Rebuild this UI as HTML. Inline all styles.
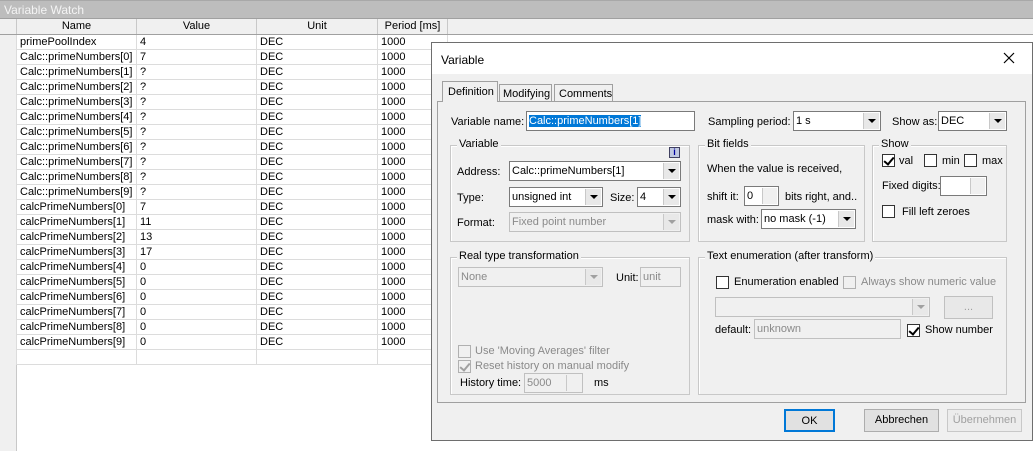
<!DOCTYPE html>
<html><head><meta charset="utf-8"><style>
*{box-sizing:border-box;margin:0;padding:0}
body{width:1033px;height:451px;overflow:hidden;background:#fff;font-family:"Liberation Sans",sans-serif;font-size:11px;color:#000;position:relative}
.a{position:absolute;white-space:nowrap}
.title{left:0;top:0;width:1033px;height:19px;background:#bdbdbd;border-bottom:1px solid #a0a0a0;border-top:1px solid #a8a8a8;color:#f4f4f4;font-size:12px;padding:2px 4px}
.hdr{left:0;top:19px;width:1033px;height:16px;background:#f0f0f0;border-bottom:1px solid #a0a0a0}
.rh{left:0;top:35px;width:17px;height:416px;background:#f0f0f0;border-right:1px solid #c8c8c8}
.row{left:0;width:1033px;height:15px;border-bottom:1px solid #dcdcdc}
.c{position:absolute;top:0;height:15px;border-right:1px solid #dcdcdc;padding-left:3px;line-height:14px}
.h{position:absolute;top:0;height:15px;border-right:1px solid #c8c8c8;text-align:center;line-height:15px}
.dlg{left:431px;top:42px;width:602px;height:399px;background:#f0f0f0;border:1px solid #6e6e6e}
.dt{left:0;top:0;width:600px;height:31px;background:#fff}
.grp{position:absolute;border:1px solid #c8c8c8;box-shadow:inset 1px 1px 0 #fff}
.gl{position:absolute;top:-8px;left:6px;background:#f0f0f0;padding:0 2px}
.in{position:absolute;background:#fff;border:1px solid #7a7a7a;height:20px;line-height:18px;padding-left:2px}
.dis{background:#f0f0f0;color:#8a8a8a;border-color:#c0c0c0}
.dd{position:absolute;right:1px;top:1px;width:16px;height:16px;background:#e8e8e8;border-left:1px solid #c8c8c8}
.dd:after{content:"";position:absolute;left:4px;top:6px;border-left:4px solid transparent;border-right:4px solid transparent;border-top:4px solid #000}
.dis .dd:after{border-top-color:#a0a0a0}
.cb{position:absolute;width:13px;height:13px;border:1px solid #333;background:#fff}
.cb.d{border-color:#b0b0b0;background:#f0f0f0}
.chk:after{content:"";position:absolute;left:3px;top:0px;width:4px;height:8px;border:solid #000;border-width:0 2px 2px 0;transform:rotate(40deg)}
.cb.d.chk:after{border-color:#a0a0a0}
.btn{position:absolute;height:23px;border:1px solid #adadad;background:#e1e1e1;text-align:center;line-height:21px}
.gr{color:#8a8a8a}
.spin{position:absolute;right:1px;top:1px;width:15px;height:16px;border-left:1px solid #c8c8c8;background:#f0f0f0}
</style></head><body>
<div class="a title">Variable Watch</div>
<div class="a hdr">
<div class="h" style="left:0;width:17px"></div>
<div class="h" style="left:17px;width:120px">Name</div>
<div class="h" style="left:137px;width:120px">Value</div>
<div class="h" style="left:257px;width:121px">Unit</div>
<div class="h" style="left:378px;width:70px">Period [ms]</div>
</div>
<div class="a rh"></div>
<div id="rows"></div>
<script>
var d=[["primePoolIndex","4"],["Calc::primeNumbers[0]","7"]];
for(var i=1;i<10;i++)d.push(["Calc::primeNumbers["+i+"]","?"]);
var v=["7","11","13","17","0","0","0","0","0","0"];
for(var i=0;i<10;i++)d.push(["calcPrimeNumbers["+i+"]",v[i]]);
d.push(["",""]);
var h="";
for(var i=0;i<d.length;i++){var e=d[i][0]!="";
h+='<div class="a row" style="top:'+(35+i*15)+'px"><div class="c" style="left:0;width:17px;background:#f0f0f0"></div><div class="c" style="left:17px;width:120px">'+d[i][0]+'</div><div class="c" style="left:137px;width:120px">'+d[i][1]+'</div><div class="c" style="left:257px;width:121px">'+(e?"DEC":"")+'</div><div class="c" style="left:378px;width:70px">'+(e?"1000":"")+'</div></div>';}
document.getElementById("rows").innerHTML=h;
</script>
<div class="a dlg">
<div class="a dt"><span class="a" style="left:9px;top:10px;font-size:12px">Variable</span>
<svg class="a" style="left:571px;top:9px" width="12" height="12"><path d="M1 1L11 11M11 1L1 11" stroke="#000" stroke-width="1.2"/></svg></div>
<div class="a" style="left:5px;top:58px;width:589px;height:302px;border:1px solid #a0a0a0;background:#f0f0f0"></div>
<div class="a" style="left:10px;top:38px;width:56px;height:21px;background:#f0f0f0;border:1px solid #a0a0a0;border-bottom:none;padding:4px 0 0 5px">Definition</div>
<div class="a" style="left:67px;top:41px;width:53px;height:18px;background:#f0f0f0;border:1px solid #a0a0a0;padding:3px 0 0 3px">Modifying</div>
<div class="a" style="left:122px;top:41px;width:59px;height:18px;background:#f0f0f0;border:1px solid #a0a0a0;padding:3px 0 0 4px">Comments</div>

<span class="a" style="left:19px;top:73px">Variable name:</span>
<div class="in" style="left:94px;top:68px;width:169px"><span style="background:#0078d7;color:#fff">Calc::primeNumbers[1]</span></div>
<span class="a" style="left:276px;top:73px">Sampling period:</span>
<div class="in" style="left:361px;top:68px;width:88px">1 s<div class="dd"></div></div>
<span class="a" style="left:460px;top:73px">Show as:</span>
<div class="in" style="left:506px;top:68px;width:69px">DEC<div class="dd"></div></div>

<div class="grp" style="left:18px;top:102px;width:240px;height:97px"><span class="gl">Variable</span></div>
<div class="a" style="left:237px;top:104px;width:11px;height:11px;background:#c0c8e0;border:1px solid #404060;color:#0000a0;font-size:9px;font-weight:bold;text-align:center;line-height:9px">i</div>
<span class="a" style="left:25px;top:123px">Address:</span>
<div class="in" style="left:77px;top:118px;width:172px">Calc::primeNumbers[1]<div class="dd"></div></div>
<span class="a" style="left:25px;top:149px">Type:</span>
<div class="in" style="left:77px;top:144px;width:94px">unsigned int<div class="dd"></div></div>
<span class="a" style="left:178px;top:149px">Size:</span>
<div class="in" style="left:205px;top:144px;width:44px">4<div class="dd"></div></div>
<span class="a" style="left:25px;top:174px">Format:</span>
<div class="in dis" style="left:77px;top:169px;width:172px">Fixed point number<div class="dd"></div></div>

<div class="grp" style="left:266px;top:102px;width:167px;height:97px"><span class="gl">Bit fields</span></div>
<span class="a" style="left:275px;top:120px">When the value is received,</span>
<span class="a" style="left:275px;top:148px">shift it:</span>
<div class="in" style="left:312px;top:143px;width:35px">0<div class="spin"></div></div>
<span class="a" style="left:353px;top:148px">bits right, and..</span>
<span class="a" style="left:275px;top:171px">mask with:</span>
<div class="in" style="left:329px;top:166px;width:95px">no mask (-1)<div class="dd"></div></div>

<div class="grp" style="left:440px;top:102px;width:135px;height:97px"><span class="gl">Show</span></div>
<div class="cb chk" style="left:450px;top:111px"></div><span class="a" style="left:467px;top:112px">val</span>
<div class="cb" style="left:492px;top:111px"></div><span class="a" style="left:510px;top:112px">min</span>
<div class="cb" style="left:532px;top:111px"></div><span class="a" style="left:550px;top:112px">max</span>
<span class="a" style="left:450px;top:137px">Fixed digits:</span>
<div class="in" style="left:508px;top:133px;width:47px"><div class="spin"></div></div>
<div class="cb" style="left:450px;top:162px"></div><span class="a" style="left:470px;top:163px">Fill left zeroes</span>

<div class="grp" style="left:18px;top:214px;width:240px;height:138px"><span class="gl">Real type transformation</span></div>
<div class="in dis" style="left:26px;top:224px;width:145px">None<div class="dd"></div></div>
<span class="a" style="left:184px;top:229px">Unit:</span>
<div class="in dis" style="left:208px;top:224px;width:41px">unit</div>
<div class="cb d" style="left:26px;top:302px"></div><span class="a gr" style="left:43px;top:302px">Use 'Moving Averages' filter</span>
<div class="cb d chk" style="left:26px;top:317px"></div><span class="a gr" style="left:43px;top:317px">Reset history on manual modify</span>
<span class="a" style="left:28px;top:334px">History time:</span>
<div class="in dis" style="left:92px;top:330px;width:59px">5000<div class="spin"></div></div>
<span class="a" style="left:162px;top:334px">ms</span>

<div class="grp" style="left:266px;top:214px;width:309px;height:138px"><span class="gl">Text enumeration (after transform)</span></div>
<div class="cb" style="left:284px;top:233px"></div><span class="a" style="left:302px;top:233px">Enumeration enabled</span>
<div class="cb d" style="left:411px;top:233px"></div><span class="a gr" style="left:429px;top:233px">Always show numeric value</span>
<div class="in dis" style="left:283px;top:254px;width:215px"><div class="dd"></div></div>
<div class="btn" style="left:512px;top:253px;width:49px;color:#a0a0a0;background:#e8e8e8;border-color:#c0c0c0">...</div>
<span class="a" style="left:283px;top:281px">default:</span>
<div class="in dis" style="left:322px;top:276px;width:147px">unknown</div>
<div class="cb chk" style="left:475px;top:281px"></div><span class="a" style="left:493px;top:281px">Show number</span>

<div class="btn" style="left:352px;top:366px;width:51px;border:2px solid #0078d7">OK</div>
<div class="btn" style="left:432px;top:366px;width:75px">Abbrechen</div>
<div class="btn" style="left:515px;top:366px;width:75px;color:#a0a0a0;background:#ececec;border-color:#c8c8c8">Übernehmen</div>
</div>
</body></html>
